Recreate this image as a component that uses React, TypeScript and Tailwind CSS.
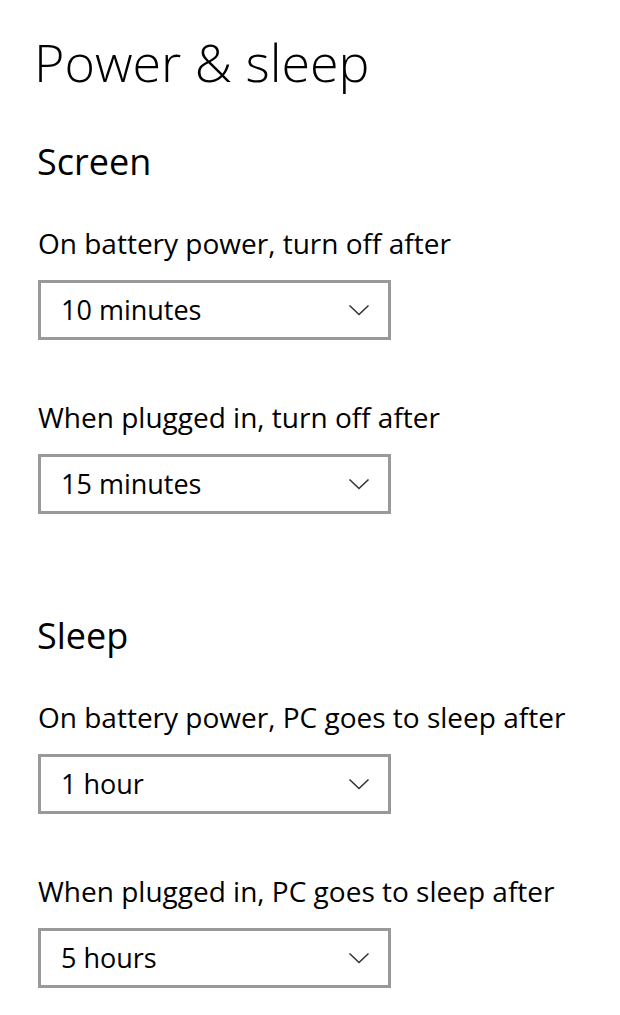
import React from 'react';

const font = { fontFamily: '"Open Sans", "Noto Sans", sans-serif' };

function Chevron() {
  return (
    <svg width="22" height="12" viewBox="0 0 22 12" fill="none" className="shrink-0">
      <path d="M1.5 1.5 L11 10.5 L20.5 1.5" stroke="#333" strokeWidth="1.6" />
    </svg>
  );
}

function Dropdown({ value }: { value: string }) {
  return (
    <div className="flex items-center justify-between w-[353px] h-[60px] border-[3px] border-[#999999] bg-white pl-[20px] pr-[18px]">
      <span className="text-[27px] leading-[36px] text-black">{value}</span>
      <Chevron />
    </div>
  );
}

function Setting({ label, value, first }: { label: string; value: string; first?: boolean }) {
  return (
    <div className={first ? 'mt-[40px]' : 'mt-[59px]'}>
      <div className="text-[28px] leading-[36px] text-black">{label}</div>
      <div className="mt-[19px]">
        <Dropdown value={value} />
      </div>
    </div>
  );
}

export default function App() {
  return (
    <div className="w-[620px] h-[1015px] bg-white overflow-hidden pl-[38px]" style={font}>
      <h1 className="pt-[32px] text-[52px] leading-[60px] font-light text-black -ml-[4px]">Power &amp; sleep</h1>

      <h2 className="mt-[47px] text-[36px] leading-[46px] text-black -ml-[1px]">Screen</h2>
      <Setting first label="On battery power, turn off after" value="10 minutes" />
      <Setting label="When plugged in, turn off after" value="15 minutes" />

      <h2 className="mt-[99px] text-[36px] leading-[46px] text-black -ml-[1px]">Sleep</h2>
      <Setting first label="On battery power, PC goes to sleep after" value="1 hour" />
      <Setting label="When plugged in, PC goes to sleep after" value="5 hours" />
    </div>
  );
}
